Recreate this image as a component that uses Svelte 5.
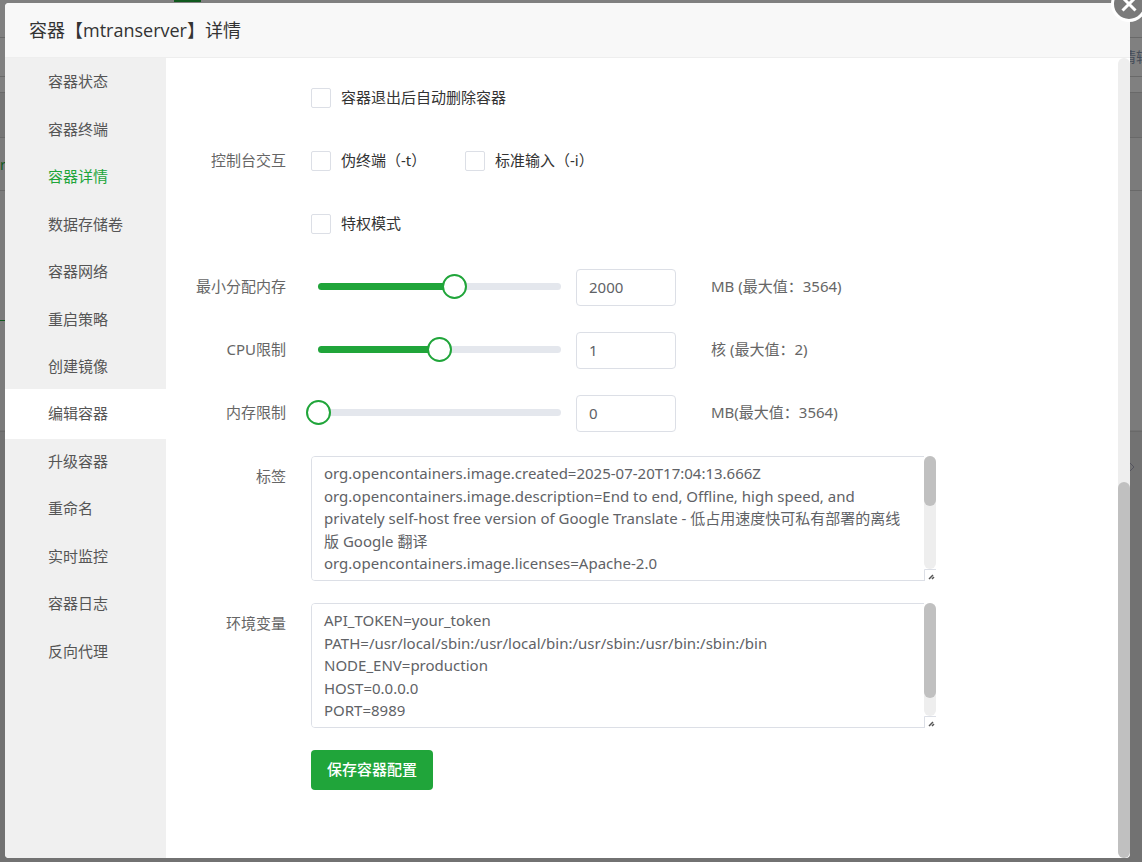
<script>
  const menu = [
    '容器状态', '容器终端', '容器详情', '数据存储卷', '容器网络', '重启策略', '创建镜像',
    '编辑容器', '升级容器', '重命名', '实时监控', '容器日志', '反向代理'
  ];
  let active = $state('编辑容器');
  const hovered = '容器详情';

  let autoRemove = $state(false);
  let tty = $state(false);
  let stdin = $state(false);
  let privileged = $state(false);

  let limits = $state([
    { id: 'mem-min', label: '最小分配内存', value: 2000, max: 3564, hint: 'MB (最大值：3564)' },
    { id: 'cpu', label: 'CPU限制', value: 1, max: 2, hint: '核 (最大值：2)' },
    { id: 'mem', label: '内存限制', value: 0, max: 3564, hint: 'MB(最大值：3564)' }
  ]);

  // bar is the thumb's share of the scroll track, in percent
  let areas = $state([
    {
      id: 'labels',
      label: '标签',
      bar: 44,
      value: `org.opencontainers.image.created=2025-07-20T17:04:13.666Z
org.opencontainers.image.description=End to end, Offline, high speed, and privately self-host free version of Google Translate - 低占用速度快可私有部署的离线版 Google 翻译
org.opencontainers.image.licenses=Apache-2.0
org.opencontainers.image.revision=923a5d6b20156e59f01e903590b0596fd37adc
org.opencontainers.image.source=https://github.com/xxnuo/MTranServer
org.opencontainers.image.title=MTranServer
org.opencontainers.image.url=https://github.com/xxnuo/MTranServer
org.opencontainers.image.version=2.1.1`
    },
    {
      id: 'env',
      label: '环境变量',
      bar: 84,
      value: `API_TOKEN=your_token
PATH=/usr/local/sbin:/usr/local/bin:/usr/sbin:/usr/bin:/sbin:/bin
NODE_ENV=production
HOST=0.0.0.0
PORT=8989
`
    }
  ]);
</script>

<div class="mask">
  <div class="page" aria-hidden="true">
    <i class="tab"></i>
    <i class="line l1"></i>
    <i class="line l2"></i>
    <i class="line l3"></i>
    <i class="line l4"></i>
    <i class="line l5"></i>
    <i class="line l6"></i>
    <i class="mark"></i>
    <span class="peek p1">r</span>
    <span class="peek p2">情辑</span>
    <svg class="arrow" width="8" height="12" viewBox="0 0 8 12">
      <path d="M2 2l4 4-4 4" fill="none" stroke="#55555f" />
    </svg>
  </div>

  <div class="dialog" role="dialog" aria-labelledby="title">
    <h1 id="title">容器【mtranserver】详情</h1>
    <button class="close" aria-label="关闭">
      <svg width="36" height="36" viewBox="0 0 36 36">
        <circle cx="18" cy="18" r="16.5" fill="#7a7a7a" stroke="#fff" stroke-width="3" />
        <path d="M11.500 11.500L24.500 24.500M24.500 11.500L11.500 24.500" stroke="#fff" stroke-width="3" />
      </svg>
    </button>

    <div class="body">
      <nav>
        <ul>
          {#each menu as item}
            <li>
              <button
                class:active={item === active}
                class:hovered={item === hovered}
                onclick={() => (active = item)}>{item}</button>
            </li>
          {/each}
        </ul>
      </nav>

      <form onsubmit={(e) => e.preventDefault()}>
        <div class="row">
          <span class="name"></span>
          <label class="check"><input type="checkbox" bind:checked={autoRemove} /><span>容器退出后自动删除容器</span></label>
        </div>
        <div class="row">
          <span class="name">控制台交互</span>
          <label class="check"><input type="checkbox" bind:checked={tty} /><span>伪终端（-t）</span></label>
          <label class="check"><input type="checkbox" bind:checked={stdin} /><span>标准输入（-i）</span></label>
        </div>
        <div class="row">
          <span class="name"></span>
          <label class="check"><input type="checkbox" bind:checked={privileged} /><span>特权模式</span></label>
        </div>

        {#each limits as limit}
          <div class="row">
            <label class="name" for={limit.id}>{limit.label}</label>
            <div class="slider">
              <div class="fill" style="width: {(limit.value / limit.max) * 100}%"></div>
              <input type="range" min="0" max={limit.max} bind:value={limit.value} aria-label={limit.label} />
            </div>
            <input class="num" id={limit.id} type="text" bind:value={limit.value} />
            <span class="hint">{limit.hint}</span>
          </div>
        {/each}

        {#each areas as area}
          <div class="row area">
            <label class="name" for={area.id}>{area.label}</label>
            <div class="box">
              <textarea id={area.id} bind:value={area.value} spellcheck="false"></textarea>
              <div class="bar">
                <div class="track"><div class="thumb" style="height: {area.bar}%"></div></div>
                <svg class="grip" width="12" height="12" viewBox="0 0 12 12">
                  <path d="M.5 12V.5H12" fill="none" stroke="#dcdfe6" />
                  <path d="M5 10l4-4M8 10l2-2" stroke="#555" stroke-width="1.500" />
                </svg>
              </div>
            </div>
          </div>
        {/each}

        <div class="row">
          <span class="name"></span>
          <button class="save">保存容器配置</button>
        </div>
      </form>

      <div class="scroll"><div class="thumb"></div></div>
    </div>
  </div>
</div>

<style>
  :global(body) { margin: 0; }

  .mask, .mask button, .mask input, .mask textarea {
    font-family: "Noto Sans", "Noto Sans CJK SC", sans-serif;
    font-size: 15px;
  }
  .mask {
    position: relative;
    display: flex;
    box-sizing: border-box;
    min-height: 100vh;
    padding: 3px 12px 4px 5px;
    background: #777;
    color: #666;
    overflow: hidden;
  }

  /* what shows of the page behind the dialog */
  .page { position: absolute; inset: 0; background: linear-gradient(#808080 0 92px, #757575 92px 137px, #7b7b7b 137px 430px, #727272 430px); }
  .tab { position: absolute; left: 174px; top: 0; width: 27px; height: 2px; background: #10591e; }
  .line { position: absolute; left: 0; right: 0; height: 1px; background: #696969; }
  .l1 { top: 37px; }
  .l2 { top: 76px; }
  .l3 { top: 92px; }
  .l4 { top: 137px; }
  .l5 { top: 190px; }
  .l6 { top: 431px; }
  .mark { position: absolute; left: 0; top: 320px; width: 5px; height: 1px; background: #10591e; }
  .peek { position: absolute; color: #454d5a; font-size: 14px; line-height: 20px; white-space: nowrap; }
  .p1 { left: 0; top: 155px; color: #10591e; }
  .p2 { right: -8px; top: 47px; }
  .arrow { position: absolute; right: 6px; top: 461px; }

  .dialog {
    position: relative;
    flex: 1;
    display: flex;
    flex-direction: column;
    border-radius: 4px;
    background: #fff;
  }
  h1 {
    margin: 0;
    padding: 0 24px;
    border-bottom: 1px solid #eee;
    border-radius: 4px 4px 0 0;
    background: #f8f8f8;
    color: #333;
    font-family: "Open Sans", "Noto Sans CJK SC", sans-serif;
    font-size: 18px;
    font-weight: 400;
    line-height: 54px;
  }
  .close {
    position: absolute;
    top: -17px;
    right: -17px;
    padding: 0;
    border: 0;
    background: none;
    cursor: pointer;
  }
  .close svg { display: block; }

  .body { flex: 1; display: flex; }

  nav { width: 161px; background: #f0f0f0; border-radius: 0 0 0 4px; }
  ul {
    display: grid;
    grid-template-rows: repeat(13, 1fr);
    height: 617px;
    margin: 0;
    padding: 0;
    list-style: none;
  }
  li { display: flex; align-items: center; min-height: 0; }
  li button {
    flex: 1;
    height: 50px;
    padding: 0 0 2px 43px;
    border: 0;
    background: none;
    color: #555;
    text-align: left;
    cursor: pointer;
  }
  li .hovered { color: #20a53a; }
  li .active { background: #fff; }

  form { flex: 1; padding-top: 20px; }
  .row { display: flex; align-items: center; min-height: 40px; margin-bottom: 23px; }
  .name { width: 120px; margin-right: 25px; padding-bottom: 4px; text-align: right; }

  .check { display: flex; align-items: center; min-width: 154px; color: #333; }
  .check span { padding-bottom: 4px; }
  .check input {
    appearance: none;
    box-sizing: border-box;
    width: 20px;
    height: 20px;
    margin: 0 10px 0 0;
    border: 1px solid #dcdfe6;
    border-radius: 2px;
    background: #fff;
  }
  .check input:checked { border-color: #20a53a; background: #20a53a; }

  .slider {
    position: relative;
    width: 243px;
    height: 7px;
    margin: 0 15px 2px 7px;
    border-radius: 4px;
    background: #e4e7ed;
  }
  .fill { height: 7px; border-radius: 4px 0 0 4px; background: #20a53a; }
  .slider input {
    position: absolute;
    inset: -9px -12px;
    width: 267px;
    height: 25px;
    margin: 0;
    appearance: none;
    background: none;
  }
  .slider input::-webkit-slider-thumb {
    appearance: none;
    box-sizing: border-box;
    width: 25px;
    height: 25px;
    border: 2px solid #20a53a;
    border-radius: 50%;
    background: #fff;
  }

  .num {
    box-sizing: border-box;
    width: 100px;
    height: 37px;
    padding: 0 12px;
    border: 1px solid #dcdfe6;
    border-radius: 4px;
    color: #606266;
  }
  .hint { margin-left: 35px; padding-bottom: 4px; }

  .area { align-items: flex-start; margin-bottom: 22px; }
  .area .name { line-height: 40px; padding: 0; }
  .box { position: relative; width: 625px; }
  textarea {
    display: block;
    box-sizing: border-box;
    width: 100%;
    height: 125px;
    padding: 5px 24px 5px 12px;
    border: 1px solid #dcdfe6;
    border-radius: 4px;
    color: #606266;
    line-height: 1.5;
    resize: none;
    scrollbar-width: none;
  }
  .bar {
    position: absolute;
    inset: 0 0 0 auto;
    display: flex;
    flex-direction: column;
    width: 12px;
    background: #fff;
    pointer-events: none;
  }
  .track { flex: 1; border-radius: 6px; background: #eee; }
  .thumb { border-radius: 6px; background: #c0c0c0; }
  .grip { display: block; }

  .save {
    width: 122px;
    height: 40px;
    padding: 0 0 4px;
    border: 0;
    border-radius: 4px;
    background: #20a53a;
    color: #fff;
    font-weight: 500;
    cursor: pointer;
  }

  .scroll {
    display: flex;
    flex-direction: column;
    justify-content: flex-end;
    width: 12px;
    border-radius: 6px;
    background: #eee;
  }
  .scroll .thumb { height: 47%; }
</style>
